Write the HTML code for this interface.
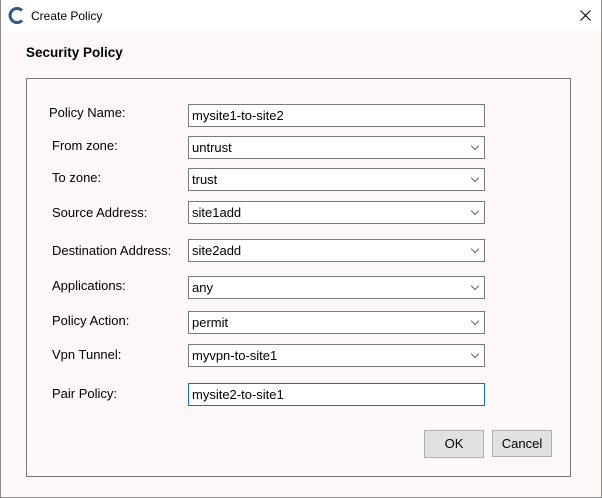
<!DOCTYPE html>
<html><head><meta charset="utf-8"><style>
*{box-sizing:border-box;margin:0;padding:0}
body{width:602px;height:498px;overflow:hidden;background:#fdf7f7;font-family:"Liberation Sans",Arial,sans-serif;font-size:13px;color:#000;position:relative}
.win{position:absolute;left:0;top:0;width:602px;height:498px;border:1px solid #8a8a8a;border-top:none}
.title{position:absolute;left:0;top:0;width:602px;height:31px;background:#fff}
.title span{position:absolute;left:31px;top:9px;font-size:12px}
h1{position:absolute;left:26px;top:45px;font-size:13.5px;font-weight:bold}
.grp{position:absolute;left:26px;top:78px;width:545px;height:399px;border:1px solid #777}
.l{position:absolute;font-size:13px}
.f{position:absolute;left:188px;width:297px;height:23px;border:1px solid #7a7a7a;background:#fff;padding:3px 0 0 3px;font-size:13px}
.f.c::after{content:"";position:absolute;right:6px;top:6px;width:5px;height:5px;border-right:1px solid #666;border-bottom:1px solid #666;transform:rotate(45deg)}
.f.a{border-color:#1a6fb8}
.b{position:absolute;top:430px;height:28px;width:60px;background:#e1e1e1;border:1px solid #adadad;text-align:center;line-height:26px;font-size:13px}
</style></head><body>
<div class="title">
<svg style="position:absolute;left:8px;top:7px" width="17" height="17" viewBox="0 0 17 17"><path d="M14 3.5A7 7 0 1 0 14 13.5" fill="none" stroke="#2a5a8a" stroke-width="3"/></svg>
<span>Create Policy</span>
<svg style="position:absolute;left:580px;top:10px" width="11" height="11" viewBox="0 0 11 11"><path d="M0.5 0.5L10.5 10.5M10.5 0.5L0.5 10.5" stroke="#000" stroke-width="1.1"/></svg>
</div>
<div class="win"></div>
<h1>Security Policy</h1>
<div class="grp"></div>
<div class="l" style="left:49px;top:105px">Policy Name:</div>
<div class="f" style="top:104px">mysite1-to-site2</div>
<div class="l" style="left:52px;top:138px">From zone:</div>
<div class="f c" style="top:136px">untrust</div>
<div class="l" style="left:52px;top:170px">To zone:</div>
<div class="f c" style="top:168px">trust</div>
<div class="l" style="left:52px;top:205px">Source Address:</div>
<div class="f c" style="top:201px">site1add</div>
<div class="l" style="left:52px;top:243px">Destination Address:</div>
<div class="f c" style="top:239px">site2add</div>
<div class="l" style="left:52px;top:278px">Applications:</div>
<div class="f c" style="top:276px">any</div>
<div class="l" style="left:52px;top:313px">Policy Action:</div>
<div class="f c" style="top:311px">permit</div>
<div class="l" style="left:52px;top:347px">Vpn Tunnel:</div>
<div class="f c" style="top:344px">myvpn-to-site1</div>
<div class="l" style="left:52px;top:386px">Pair Policy:</div>
<div class="f a" style="top:383px">mysite2-to-site1</div>
<div class="b" style="left:424px">OK</div>
<div class="b" style="left:492px;height:27px">Cancel</div>
</body></html>
